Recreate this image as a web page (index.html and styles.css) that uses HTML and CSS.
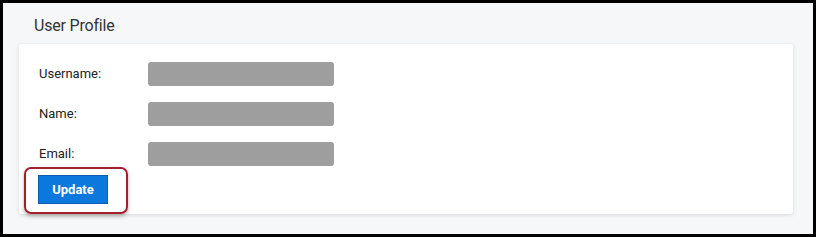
FILE: index.html
```html
<!DOCTYPE html>
<html lang="en">
<head>
    <meta charset="UTF-8">
    <title>User Profile</title>
    <link rel="stylesheet" href="styles.css">
</head>
<body>
    <div class="frame">
        <div class="page-title">User Profile</div>
        <div class="card">
            <div class="form-grid">
                <label class="field-label">Username:</label>
                <div class="field-value"></div>
                <label class="field-label">Name:</label>
                <div class="field-value"></div>
                <label class="field-label">Email:</label>
                <div class="field-value"></div>
            </div>
            <button class="update-btn">Update</button>
            <div class="highlight"></div>
        </div>
    </div>
</body>
</html>
```

FILE: styles.css
```css
html, body {
    margin: 0;
    padding: 0;
}
body {
    font-family: Roboto, "Liberation Sans", sans-serif;
    color: #2b2b2b;
    background: #000;
}
.frame {
    box-sizing: border-box;
    width: 816px;
    height: 237px;
    border: 3px solid #000;
    background: #f6f7f9;
    padding: 0 20px 0 16px;
}
.page-title {
    font-size: 16px;
    color: #333;
    padding: 13px 0 0 15px;
    height: 28px;
    letter-spacing: -0.2px;
}
.card {
    position: relative;
    background: #fff;
    border-radius: 3px;
    box-shadow: 0 1px 4px rgba(0, 0, 0, 0.12);
    padding: 18px 20px 10px 20px;
    height: 170px;
    box-sizing: border-box;
}
.form-grid {
    display: grid;
    grid-template-columns: 109px 186px;
    grid-auto-rows: 24px;
    row-gap: 16px;
    align-items: center;
}
.field-label {
    font-size: 13px;
    color: #222;
    margin-top: -2px;
}
.field-value {
    height: 24px;
    background: #9e9e9e;
    border-radius: 3px;
}
.update-btn {
    display: block;
    margin: 9px 0 0 -1px;
    width: 70px;
    height: 29px;
    background: #0b78de;
    border: 1px solid #0a5db0;
    color: #fff;
    font-family: Roboto, "Liberation Sans", sans-serif;
    font-weight: bold;
    font-size: 13px;
    padding: 0;
}
.highlight {
    position: absolute;
    left: 5px;
    top: 123px;
    width: 104px;
    height: 47px;
    box-sizing: border-box;
    border: 2.5px solid #a31f2e;
    border-radius: 7px;
    box-shadow: 0 2px 4px rgba(0, 0, 0, 0.3);
}
```
